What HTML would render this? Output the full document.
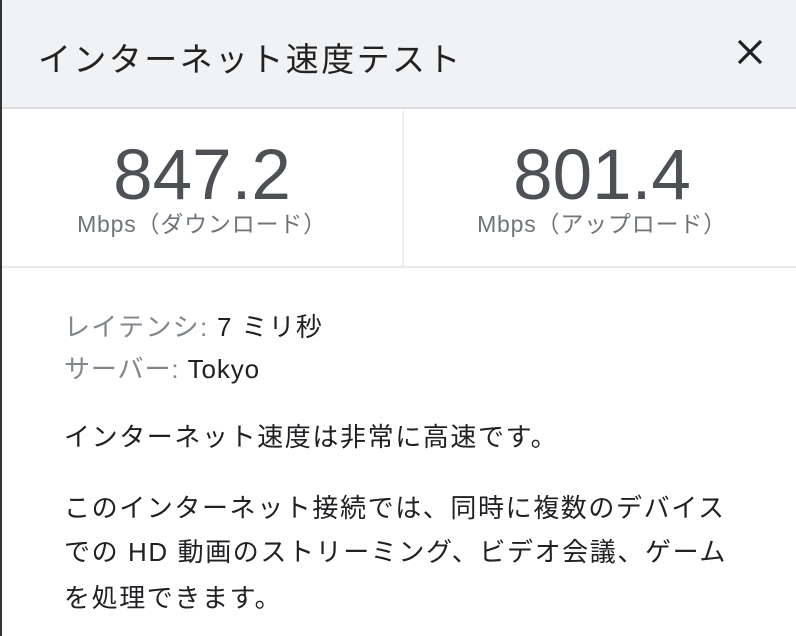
<!DOCTYPE html>
<html><head><meta charset="utf-8"><style>
*{margin:0;padding:0;box-sizing:border-box}
body{width:796px;height:636px;overflow:hidden;background:#fff;font-family:"Liberation Sans","Noto Sans CJK JP",sans-serif;position:relative}
.edge{position:absolute;left:0;top:0;width:2px;height:636px;background:#333}
.hdr{position:absolute;left:2px;top:0;width:794px;height:109px;background:#f1f2f4;border-bottom:2px solid #dadce0}
.title{position:absolute;left:36px;top:40px;font-size:33px;letter-spacing:2.4px;color:#222;line-height:40px;white-space:nowrap}
.x{position:absolute;left:733px;top:37px;width:30px;height:30px}
.stats{position:absolute;left:2px;top:111px;width:794px;height:157px;border-bottom:2px solid #e8eaed}
.div{position:absolute;left:400px;top:0;width:2px;height:155px;background:#eceef0}
.num{position:absolute;top:30px;width:400px;text-align:center;font-size:71px;color:#4d5156;line-height:70px}
.lbl{position:absolute;top:100px;width:400px;text-align:center;font-size:23px;letter-spacing:0.8px;color:#70757a;line-height:26px;white-space:nowrap}
.t{position:absolute;left:64px;font-size:26px;letter-spacing:1.6px;color:#202124;line-height:32px;white-space:nowrap}
.g{color:#80868b}
</style></head><body>
<div class="edge"></div>
<div class="hdr">
<div class="title">インターネット速度テスト</div>
<svg class="x" viewBox="0 0 30 30"><path d="M4 4L26 26M26 4L4 26" stroke="#202124" stroke-width="3.2"/></svg>
</div>
<div class="stats">
<div class="num" style="left:0">847.2</div>
<div class="lbl" style="left:0">Mbps（ダウンロード）</div>
<div class="div"></div>
<div class="num" style="left:400px">801.4</div>
<div class="lbl" style="left:400px">Mbps（アップロード）</div>
</div>
<div class="t" style="top:311px;letter-spacing:1.3px"><span class="g">レイテンシ:</span> 7 ミリ秒</div>
<div class="t" style="top:353px;letter-spacing:0.9px"><span class="g">サーバー:</span> Tokyo</div>
<div class="t" style="top:421px">インターネット速度は非常に高速です。</div>
<div class="t" style="top:492px">このインターネット接続では、同時に複数のデバイス</div>
<div class="t" style="top:536px">での HD 動画のストリーミング、ビデオ会議、ゲーム</div>
<div class="t" style="top:582px">を処理できます。</div>
</body></html>
